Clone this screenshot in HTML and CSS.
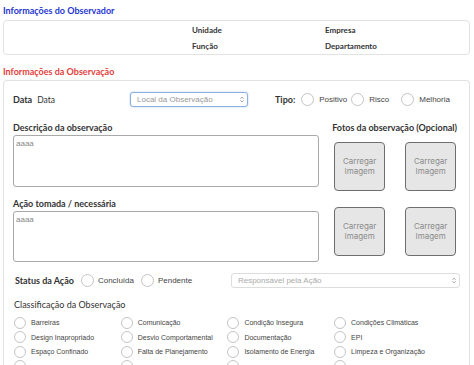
FILE: index.html
```html
<!DOCTYPE html>
<html lang="pt-BR">
  <head>
    <meta charset="UTF-8" />
    <meta name="viewport" content="width=device-width, initial-scale=1.0" />
    <title>Observação de Segurança</title>
    <link rel="stylesheet" href="styles.css">
  </head>
  <body>
    <h2 class="section-title observer-title">Informações do Observador</h2>
    <div class="panel observer-panel">
      <div class="observer-grid">
        <span>Unidade</span>
        <span>Empresa</span>
        <span>Função</span>
        <span>Departamento</span>
      </div>
    </div>

    <h2 class="section-title observation-title">Informações da Observação</h2>
    <div class="panel observation-panel">
      <div class="top-row">
        <div class="data-field"><strong>Data</strong><span>Data</span></div>
        <div class="select-wrap local-select">
          <select>
            <option>Local da Observação</option>
          </select>
          <svg class="select-arrows" width="4" height="7" viewBox="0 0 4 7" fill="none" stroke="#777" stroke-width="0.8">
            <path d="M0.6 2.6 L2 1.2 L3.4 2.6"></path>
            <path d="M0.6 4.4 L2 5.8 L3.4 4.4"></path>
          </svg>
        </div>
        <div class="tipo">
          <span class="tipo-label">Tipo:</span>
          <label class="radio tipo-option"><input type="radio" name="tipo"><span>Positivo</span></label>
          <label class="radio tipo-option"><input type="radio" name="tipo"><span>Risco</span></label>
          <label class="radio tipo-option"><input type="radio" name="tipo"><span>Melhoria</span></label>
        </div>
      </div>

      <div class="details">
        <div class="text-fields">
          <label class="field-label">Descrição da observação</label>
          <textarea class="description">aaaa</textarea>
          <label class="field-label">Ação tomada / necessária</label>
          <textarea class="action">aaaa</textarea>
        </div>
        <div class="photos">
          <div class="field-label">Fotos da observação (Opcional)</div>
          <div class="photo-grid">
            <button type="button" class="photo">Carregar<br>Imagem</button>
            <button type="button" class="photo">Carregar<br>Imagem</button>
            <button type="button" class="photo">Carregar<br>Imagem</button>
            <button type="button" class="photo">Carregar<br>Imagem</button>
          </div>
        </div>
      </div>

      <div class="status-row">
        <span class="status-label">Status da Ação</span>
        <label class="radio status-option"><input type="radio" name="status"><span>Concluída</span></label>
        <label class="radio status-option"><input type="radio" name="status"><span>Pendente</span></label>
        <div class="select-wrap responsible-select">
          <select>
            <option>Responsável pela Ação</option>
          </select>
          <svg class="select-arrows" width="4" height="7" viewBox="0 0 4 7" fill="none" stroke="#777" stroke-width="0.8">
            <path d="M0.6 2.6 L2 1.2 L3.4 2.6"></path>
            <path d="M0.6 4.4 L2 5.8 L3.4 4.4"></path>
          </svg>
        </div>
      </div>

      <div class="class-title">Classificação da Observação</div>
      <div class="class-grid">
        <label class="radio small"><input type="radio" name="classe"><span>Barreiras</span></label>
        <label class="radio small"><input type="radio" name="classe"><span>Comunicação</span></label>
        <label class="radio small"><input type="radio" name="classe"><span>Condição Insegura</span></label>
        <label class="radio small"><input type="radio" name="classe"><span>Condições Climáticas</span></label>
        <label class="radio small"><input type="radio" name="classe"><span>Design Inapropriado</span></label>
        <label class="radio small"><input type="radio" name="classe"><span>Desvio Comportamental</span></label>
        <label class="radio small"><input type="radio" name="classe"><span>Documentação</span></label>
        <label class="radio small"><input type="radio" name="classe"><span>EPI</span></label>
        <label class="radio small"><input type="radio" name="classe"><span>Espaço Confinado</span></label>
        <label class="radio small"><input type="radio" name="classe"><span>Falta de Planejamento</span></label>
        <label class="radio small"><input type="radio" name="classe"><span>Isolamento de Energia</span></label>
        <label class="radio small"><input type="radio" name="classe"><span>Limpeza e Organização</span></label>
        <label class="radio small"><input type="radio" name="classe" aria-label="Máquinas"></label>
        <label class="radio small"><input type="radio" name="classe" aria-label="Procedimentos"></label>
        <label class="radio small"><input type="radio" name="classe" aria-label="Sinalização"></label>
        <label class="radio small"><input type="radio" name="classe" aria-label="Trabalho em Altura"></label>
      </div>
    </div>
  </body>
</html>
```

FILE: styles.css
```css
:root {
  --text: #333333;
  --muted: #999999;
  --panel-border: #e2e2e2;
  --radio-border: #c4c4c4;
  --blue: #1f36d4;
  --red: #e5403a;
}

* {
  margin: 0;
  padding: 0;
  box-sizing: border-box;
}

body {
  font-family: 'Lato', 'Liberation Sans', sans-serif;
  color: var(--text);
  background: #ffffff;
  padding: 0 4px 0 3px;
}

.section-title {
  font-size: 9px;
  font-weight: 700;
  line-height: 12px;
}

.observer-title {
  color: var(--blue);
  padding-top: 5px;
  margin-bottom: 3px;
}

.observation-title {
  color: var(--red);
  margin-top: 11px;
  margin-bottom: 2px;
}

.panel {
  border: 1px solid var(--panel-border);
  border-radius: 4px;
}

/* observer block */
.observer-panel {
  height: 35px;
  padding-top: 1px;
}

.observer-grid {
  margin-left: 188px;
  display: grid;
  grid-template-columns: 133px auto;
  grid-auto-rows: 16px;
  align-items: center;
  font-size: 8px;
  font-weight: 700;
}

/* observation block */
.observation-panel {
  padding: 11px 12px 0 9px;
  border-bottom: none;
  border-bottom-left-radius: 0;
  border-bottom-right-radius: 0;
}

.top-row {
  display: flex;
  align-items: center;
  height: 15px;
}

.data-field {
  width: 117px;
  display: flex;
  align-items: baseline;
  gap: 5px;
}

.data-field strong {
  font-size: 9px;
}

.data-field span {
  font-size: 8.5px;
}

.select-wrap {
  position: relative;
  height: 15px;
}

.select-wrap select {
  display: block;
  appearance: none;
  -webkit-appearance: none;
  width: 100%;
  height: 15px;
  border-radius: 3px;
  background: #ffffff;
  font-family: 'Liberation Sans', Arial, sans-serif;
  font-size: 8px;
  color: var(--muted);
  padding: 0 10px 0 6px;
  outline: none;
}

.select-arrows {
  position: absolute;
  right: 4px;
  top: 4px;
}

.local-select {
  width: 118px;
}

.local-select select {
  border: 1px solid #8cb0e2;
  box-shadow: 0 0 2px rgba(82, 140, 222, 0.45);
}

.tipo {
  display: flex;
  align-items: center;
  margin-left: 27px;
}

.tipo-label {
  font-size: 9px;
  font-weight: 700;
  margin-right: 6px;
}

.radio {
  display: flex;
  align-items: center;
  gap: 5px;
  font-family: 'Liberation Sans', Arial, sans-serif;
  font-size: 8px;
  color: #444444;
  white-space: nowrap;
}

.radio input {
  appearance: none;
  -webkit-appearance: none;
  width: 13px;
  height: 13px;
  border: 1px solid var(--radio-border);
  border-radius: 50%;
  background: #ffffff;
  flex-shrink: 0;
  margin: 0;
}

.tipo-option {
  width: 50px;
}

/* text areas and photos */
.details {
  display: flex;
  gap: 13px;
  margin-top: 15px;
}

.text-fields {
  width: 307px;
}

.field-label {
  display: block;
  font-size: 9px;
  font-weight: 700;
  line-height: 12px;
  margin-bottom: 1px;
  white-space: nowrap;
}

textarea {
  display: block;
  width: 100%;
  border: 1px solid #a9a9a9;
  border-radius: 3px;
  padding: 3px 2px;
  font-family: 'Liberation Sans', Arial, sans-serif;
  font-size: 8px;
  line-height: 10px;
  color: #888888;
  resize: none;
}

.description {
  height: 52px;
  margin-bottom: 11px;
}

.action {
  height: 51px;
}

.photos .field-label {
  margin-bottom: 8px;
}

.photo-grid {
  display: grid;
  grid-template-columns: 51px 51px;
  column-gap: 20px;
  row-gap: 16px;
  padding-left: 2px;
}

.photo {
  height: 49px;
  border: 1px solid #6e6e6e;
  border-radius: 4px;
  background: #e6e6e6;
  font-family: 'Inter', sans-serif;
  font-size: 8px;
  line-height: 9.6px;
  color: #8a8a8a;
  text-align: center;
}

/* status */
.status-row {
  display: flex;
  align-items: center;
  height: 15px;
  margin-top: 11px;
  padding-left: 2px;
}

.status-label {
  font-size: 9px;
  font-weight: 700;
  margin-right: 7px;
  white-space: nowrap;
  flex-shrink: 0;
}

.status-option {
  width: 60px;
  flex-shrink: 0;
  gap: 4px;
}

.responsible-select {
  width: 229px;
  flex-shrink: 0;
  margin-left: 30px;
}

.responsible-select select {
  border: 1px solid #dddddd;
  color: #aaaaaa;
}

/* classification */
.class-title {
  font-size: 9px;
  line-height: 12px;
  margin-top: 11px;
  padding-left: 1px;
}

.class-grid {
  display: grid;
  grid-template-columns: repeat(4, 106.7px);
  grid-auto-rows: 14.5px;
  align-items: center;
  margin-top: 4.5px;
  padding-left: 1px;
}

.radio.small {
  font-size: 7px;
  gap: 5px;
}

.radio.small input {
  width: 12px;
  height: 12px;
}
```
